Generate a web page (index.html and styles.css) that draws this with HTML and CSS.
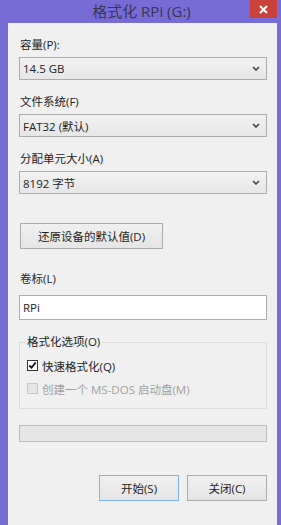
FILE: index.html
```html
<!DOCTYPE html>
<html lang="zh-CN">
<head>
<meta charset="utf-8">
<title>格式化 RPi (G:)</title>
<link rel="stylesheet" href="styles.css">
</head>
<body>
<div class="window">
  <div class="titlebar">
    <span></span>
    <span class="title">格式化 RPi (G:)</span>
    <span class="close"><svg width="9" height="9" viewBox="0 0 9 9"><path d="M1 1L8 8M8 1L1 8" stroke="#fff" stroke-width="2"/></svg></span>
  </div>
  <div class="client">
    <div class="label first">容量(P):</div>
    <div class="combo"><span>14.5 GB</span><svg class="chev" width="8" height="5" viewBox="0 0 8 5"><path d="M1 1L4 4L7 1" fill="none" stroke="#444" stroke-width="1.6"/></svg></div>

    <div class="label">文件系统(F)</div>
    <div class="combo"><span>FAT32 (默认)</span><svg class="chev" width="8" height="5" viewBox="0 0 8 5"><path d="M1 1L4 4L7 1" fill="none" stroke="#444" stroke-width="1.6"/></svg></div>

    <div class="label">分配单元大小(A)</div>
    <div class="combo"><span>8192 字节</span><svg class="chev" width="8" height="5" viewBox="0 0 8 5"><path d="M1 1L4 4L7 1" fill="none" stroke="#444" stroke-width="1.6"/></svg></div>

    <div class="btn restore">还原设备的默认值(D)</div>

    <div class="label vol">卷标(L)</div>
    <div class="textbox">RPi</div>

    <fieldset class="group">
      <legend>格式化选项(O)</legend>
      <div class="check">
        <span class="box checked"><svg width="9" height="9" viewBox="0 0 10 10"><path d="M1.5 5L4 7.5L8.5 1.5" fill="none" stroke="#111" stroke-width="2"/></svg></span>
        <span>快速格式化(Q)</span>
      </div>
      <div class="check disabled">
        <span class="box"></span>
        <span>创建一个 MS-DOS 启动盘(M)</span>
      </div>
    </fieldset>

    <div class="progress"></div>

    <div class="actions">
      <div class="btn action default">开始(S)</div>
      <div class="btn action">关闭(C)</div>
    </div>
  </div>
</div>
</body>
</html>
```

FILE: styles.css
```css
html, body {
  margin: 0;
  padding: 0;
}
body {
  background: #776cd6;
  font-family: "Open Sans", "Noto Sans CJK SC", sans-serif;
  font-size: 11.5px;
  color: #222;
  overflow: hidden;
}
.window {
  height: 525px;
  display: flex;
  flex-direction: column;
}
.titlebar {
  height: 23px;
  display: grid;
  grid-template-columns: 1fr auto 1fr;
  align-items: start;
}
.title {
  font-size: 15px;
  line-height: 23px;
  color: #3a3550;
  padding-left: 2px;
}
.close {
  justify-self: end;
  margin-right: 4px;
  width: 27px;
  height: 18px;
  background: #c9433b;
  display: flex;
  align-items: center;
  justify-content: center;
}
.client {
  flex: 1;
  margin: 0 4px 0 8px;
  background: #f0f0f0;
  padding: 14px 10px 0 11px;
}
.label {
  line-height: 16px;
  height: 16px;
  margin-top: 14px;
  padding-left: 1px;
}
.label.first {
  margin-top: 0;
}
.combo {
  margin-top: 4px;
  height: 23px;
  box-sizing: border-box;
  border: 1px solid #acacac;
  background: linear-gradient(#f2f2f2, #e6e6e6);
  display: flex;
  align-items: center;
  justify-content: space-between;
  padding: 0 6px 0 3px;
}
.btn {
  box-sizing: border-box;
  height: 26px;
  border: 1px solid #acacac;
  background: linear-gradient(#f0f0f0, #e5e5e5);
  display: flex;
  align-items: center;
  justify-content: center;
}
.restore {
  margin-top: 29px;
  margin-left: 1px;
  width: 143px;
}
.label.vol {
  margin-top: 22px;
}
.textbox {
  margin-top: 8px;
  height: 25px;
  box-sizing: border-box;
  border: 1px solid #abadb3;
  background: #fff;
  display: flex;
  align-items: center;
  padding-left: 3px;
}
.group {
  margin: 14px 0 0 0;
  padding: 4px 5px 8px 5px;
  border: 1px solid #dcdcdc;
  min-width: 0;
}
.group legend {
  padding: 0 2px;
  line-height: 16px;
}
.check {
  display: flex;
  align-items: center;
  gap: 4px;
  height: 23px;
  margin-left: 2px;
}
.box {
  width: 11px;
  height: 11px;
  box-sizing: border-box;
  border: 1px solid #333;
  background: #fff;
  display: flex;
  align-items: center;
  justify-content: center;
}
.disabled {
  color: #a0a0a0;
}
.disabled .box {
  border-color: #c8c8c8;
  background: #e6e6e6;
}
.progress {
  margin-top: 16px;
  height: 17px;
  box-sizing: border-box;
  border: 1px solid #bcbcbc;
  background: #e6e6e6;
}
.actions {
  margin-top: 33px;
  display: flex;
  justify-content: flex-end;
  gap: 8px;
}
.action {
  width: 80px;
}
.default {
  border-color: #7eb4ea;
}
```
